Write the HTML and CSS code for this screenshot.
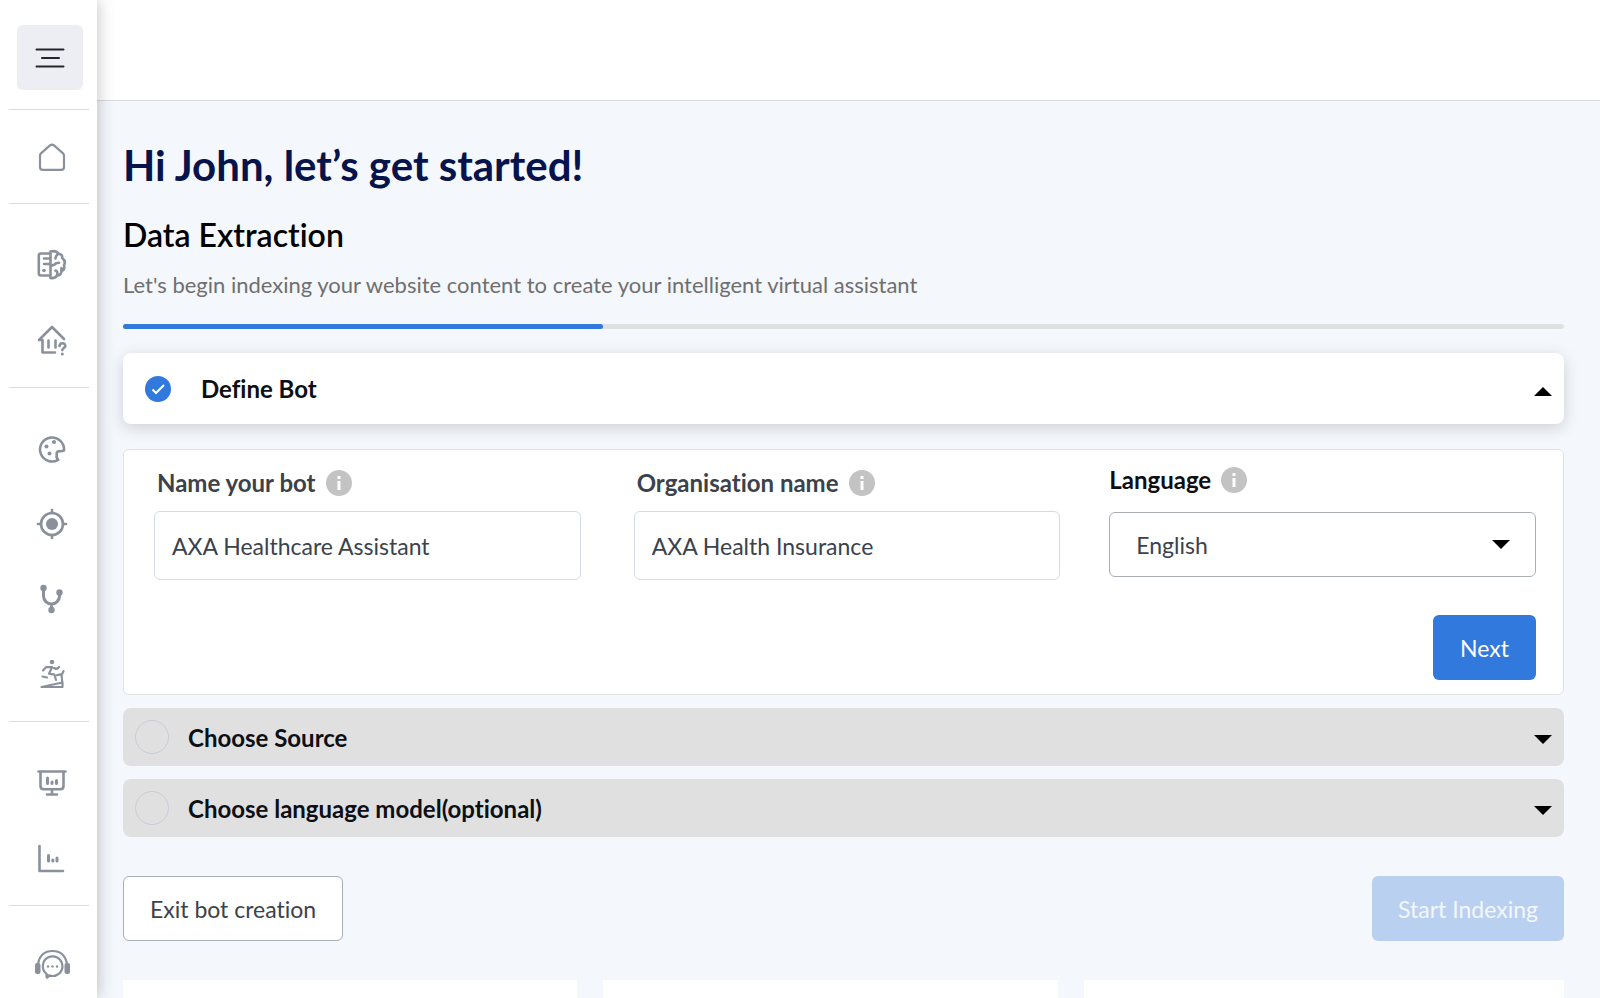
FILE: index.html
```html
<!DOCTYPE html>
<html lang="en">
<head>
<meta charset="utf-8">
<meta name="viewport" content="width=device-width, initial-scale=1">
<title>Data Extraction</title>
<link rel="stylesheet" href="styles.css">
</head>
<body>
<div class="app">
  <aside class="sidebar">
    <button class="menu-button" type="button" aria-label="Menu">
      <svg width="30" height="22" viewBox="0 0 30 22" fill="none" stroke="#23262f" stroke-width="2" stroke-linecap="round"><path d="M1.500 2.500h27M7 11h17M1.500 19.500h27"/></svg>
    </button>
    <nav class="nav">
      <div class="nav-group nav-group-first">
        <a class="nav-item" href="#" aria-label="Home"><svg class="icon" viewBox="0 0 36 36"><path class="thin" d="M6 16.500c0-1 .4-1.700 1.200-2.400l8.800-7.700c1.400-1.200 2.600-1.200 4 0l8.800 7.700c.8.700 1.200 1.400 1.200 2.400V28c0 1.900-1 2.800-2.800 2.800H8.800C7 30.800 6 29.900 6 28z"/></svg></a>
      </div>
      <div class="nav-group">
        <a class="nav-item" href="#" aria-label="Knowledge"><svg class="icon" viewBox="0 0 36 36"><path d="M16.500 6.500H7C5.500 6.500 4.800 7.200 4.800 8.700v17.600c0 1.500.7 2.200 2.200 2.200h9.500M16.500 4.500v26.500M16.500 4.500c3.500-.8 6.500 0 7.800 2.200 2.700 0 4.200 1.800 3.900 4.300 2.300 1.800 3.300 4.500 1.800 7 .8 3-.4 5.500-2.600 6.300-.2 2.700-1.900 4.200-4.400 4.200-1.500 2.300-4 3-6.500 2.500M10 11.500h6M10 17h6M16.500 18.500c3 0 4.500-.6 5.500-2.200l3-.5M21.500 11.500c-.1-2 .8-3.200 2.800-4.800M21.500 23.500c1.500.5 2.200 2.500 1.500 5M27.400 24.300v-3.300"/><circle class="dot" cx="10" cy="23.500" r="1.800"/></svg></a>
        <a class="nav-item" href="#" aria-label="Unanswered"><svg class="icon" viewBox="0 0 36 36"><path d="M5 18L18 5l12 12M5 18h3.500v12.500H21M14.500 18.500v7M21.500 18.500v7M25.500 24c.2-2 1.300-2.800 3-2.700 1.800.1 2.900 1.200 2.800 2.800-.1 1.800-3 2-3 4"/><circle class="dot" cx="28.300" cy="32" r="1.500"/></svg></a>
      </div>
      <div class="nav-group">
        <a class="nav-item" href="#" aria-label="Appearance"><svg class="icon" viewBox="0 0 36 36"><path d="M24.200 28.800A12 12 0 1 1 30 19.500c-2.300.8-3.300 1.100-4.500.6-2.500.1-3.200 1.900-2.700 3.400-.6 2 0 4 1.400 5.300z"/><circle class="dot" cx="12.500" cy="15.500" r="2"/><circle class="dot" cx="20" cy="11" r="2"/><circle class="dot" cx="15.500" cy="22.500" r="2"/></svg></a>
        <a class="nav-item" href="#" aria-label="Target"><svg class="icon" viewBox="0 0 36 36"><circle cx="18" cy="18" r="11"/><circle class="dot" cx="18" cy="18" r="6"/><path d="M18 4v3M18 29v3M4 18h3M29 18h3"/></svg></a>
        <a class="nav-item" href="#" aria-label="Flows"><svg class="icon icon-heavy" viewBox="0 0 36 36"><path d="M9.500 7v8a8 8 0 0 0 16 0v-3M17.500 23v6"/><circle class="dot" cx="9.500" cy="7" r="3.200"/><circle class="dot" cx="25.500" cy="11.500" r="3.200"/><circle class="dot" cx="17.500" cy="29" r="3.200"/></svg></a>
        <a class="nav-item" href="#" aria-label="Training"><svg class="icon icon-thin" viewBox="0 0 36 36"><circle class="dot" cx="18" cy="6" r="2.300"/><path d="M9 14.500l3-3.300h6l-3 6.500 5.500 1L22 24M20 12c2 1.500 3.500.8 5-1M8.500 20.500l4.500 1M7.500 31l21-4.500V31zM28.300 26.500l-.8-8M23 19.200l5-1 1.500-3"/></svg></a>
      </div>
      <div class="nav-group">
        <a class="nav-item" href="#" aria-label="Reports"><svg class="icon" viewBox="0 0 36 36"><path d="M4.500 6.500h27M6.500 7v14c0 2.200 1 3.200 3.200 3.200h16.600c2.200 0 3.200-1 3.200-3.200V7M18 24.500V29M13 29.500h10"/><path class="bars" d="M13.500 13v5.500M18 17v1.500M22.500 15.500v3"/></svg></a>
        <a class="nav-item" href="#" aria-label="Analytics"><svg class="icon" viewBox="0 0 36 36"><path d="M5.500 6v25H29"/><path class="bars" d="M14.500 15.500V21M18.800 20v1M23 18v3"/></svg></a>
      </div>
      <div class="nav-group nav-group-last">
        <a class="nav-item" href="#" aria-label="Support"><svg class="icon" viewBox="0 0 36 36"><path class="thin" d="M4 16C5.500 7.500 11 3 18.500 3S31.500 7.500 33 16"/><path class="thin" d="M12.500 29v-3.200A9.800 9.800 0 1 1 16 27.600z"/><path class="dot" d="M12.500 31.500v-6l5 2z"/><rect class="dot" x="1" y="15" width="5.500" height="11" rx="2"/><rect class="dot" x="30.500" y="15" width="5.500" height="11" rx="2"/><circle class="dot" cx="14" cy="18.500" r="1.200"/><circle class="dot" cx="18.500" cy="18.500" r="1.200"/><circle class="dot" cx="23" cy="18.500" r="1.200"/></svg></a>
      </div>
    </nav>
  </aside>

  <div class="page">
    <header class="topbar"></header>
    <main class="content">
      <h1 class="greeting">Hi John, let’s get started!</h1>
      <h2 class="section-title">Data Extraction</h2>
      <p class="section-text">Let's begin indexing your website content to create your intelligent virtual assistant</p>
      <div class="progress"><div class="progress-fill"></div></div>

      <button class="step step-open" type="button" aria-expanded="true">
        <svg class="step-check" width="26" height="26" viewBox="0 0 26 26"><circle cx="13" cy="13" r="13" fill="#3179dc"/><path d="M7.500 13.500l3.500 3.500 8-8" fill="none" stroke="#fff" stroke-width="2"/></svg>
        <span class="step-label">Define Bot</span>
        <svg class="caret" width="18" height="10" viewBox="0 0 18 10"><path d="M9 0l9 9H0z"/></svg>
      </button>

      <form class="panel">
        <div class="fields">
          <div class="field">
            <div class="field-head"><label for="bot">Name your bot</label><svg class="info" viewBox="0 0 26 26"><circle cx="13" cy="13" r="13" fill="#c3c3c3"/><path d="M11.500 6h3v3h-3zM11.500 11h3v9h-3z" fill="#fff"/></svg></div>
            <input class="control" id="bot" type="text" value="AXA Healthcare Assistant">
          </div>
          <div class="field">
            <div class="field-head"><label for="org">Organisation name</label><svg class="info" viewBox="0 0 26 26"><circle cx="13" cy="13" r="13" fill="#c3c3c3"/><path d="M11.500 6h3v3h-3zM11.500 11h3v9h-3z" fill="#fff"/></svg></div>
            <input class="control" id="org" type="text" value="AXA Health Insurance">
          </div>
          <div class="field field-language">
            <div class="field-head"><label for="lang">Language</label><svg class="info" viewBox="0 0 26 26"><circle cx="13" cy="13" r="13" fill="#c3c3c3"/><path d="M11.500 6h3v3h-3zM11.500 11h3v9h-3z" fill="#fff"/></svg></div>
            <div class="select-wrap">
              <select class="control select" id="lang"><option>English</option></select>
              <svg class="select-caret" width="18" height="10" viewBox="0 0 18 10"><path d="M0 0h18L9 9z"/></svg>
            </div>
          </div>
        </div>
        <div class="panel-actions"><button class="button button-primary" type="button">Next</button></div>
      </form>

      <button class="step step-closed" type="button" aria-expanded="false">
        <span class="step-ring"></span>
        <span class="step-label">Choose Source</span>
        <svg class="caret" width="18" height="10" viewBox="0 0 18 10"><path d="M0 0h18L9 9z"/></svg>
      </button>
      <button class="step step-closed" type="button" aria-expanded="false">
        <span class="step-ring"></span>
        <span class="step-label">Choose language model(optional)</span>
        <svg class="caret" width="18" height="10" viewBox="0 0 18 10"><path d="M0 0h18L9 9z"/></svg>
      </button>

      <div class="actions">
        <button class="button button-outline" type="button">Exit bot creation</button>
        <button class="button button-primary" type="button" disabled>Start Indexing</button>
      </div>

      <div class="cards"><div class="card"></div><div class="card"></div><div class="card"></div></div>
    </main>
  </div>
</div>
</body>
</html>
```
FILE: styles.css
```css
* {
  box-sizing: border-box;
}

body {
  margin: 0;
  height: 100vh;
  overflow: hidden;
  background: #f4f7fc;
  color: #0c0f14;
  font-family: Lato, "Liberation Sans", sans-serif;
  font-size: 23px;
  font-variant-ligatures: none;
}

button,
input,
select {
  font: inherit;
}

.app {
  display: flex;
  height: 100vh;
}

.sidebar {
  position: relative;
  z-index: 1;
  flex: none;
  width: 97px;
  padding: 25px 8px 0 9px;
  overflow: hidden;
  background: #fff;
  box-shadow: 0 0 16px rgba(0, 0, 0, 0.26);
}

.menu-button {
  display: flex;
  align-items: center;
  justify-content: center;
  width: 66px;
  height: 65px;
  margin: 0 8px 19px;
  padding: 0;
  border: 0;
  border-radius: 6px;
  background: #edeef3;
}

.nav-group {
  padding: 23px 0 10px 6px;
  border-top: 1px solid #d3dce7;
}

.nav-group-first {
  padding-top: 9px;
  padding-bottom: 9px;
}

.nav-group-last {
  padding-top: 22px;
}

.nav-item {
  display: flex;
  align-items: center;
  justify-content: center;
  height: 75px;
}

.icon {
  width: 36px;
  height: 36px;
  fill: none;
  stroke: #8a919d;
  stroke-width: 2.6;
  stroke-linecap: round;
  stroke-linejoin: round;
}

.icon-heavy {
  stroke-width: 3;
}

.icon-thin,
.thin {
  stroke-width: 2.2;
}

.bars {
  stroke-width: 3;
}

.dot {
  fill: #8a919d;
  stroke: none;
}

.page {
  flex: 1;
  min-width: 0;
}

.topbar {
  height: 101px;
  border-bottom: 1px solid #d9dbdf;
  background: #fff;
}

.content {
  padding: 39px 36px 0 26px;
}

.greeting {
  margin: 0;
  color: #07134b;
  font-size: 42px;
  font-weight: 700;
  line-height: 50px;
}

.section-title {
  margin: 25px 0 0;
  color: #000;
  font-size: 32px;
  font-weight: 600;
  line-height: 40px;
}

.section-text {
  margin: 15px 0 0;
  color: #6f6f6f;
  font-size: 22px;
  line-height: 30px;
}

.progress {
  height: 5px;
  margin: 24px 0;
  border-radius: 3px;
  background: #dfe0e2;
}

.progress-fill {
  width: 33.3%;
  height: 100%;
  border-radius: inherit;
  background: #3179dc;
}

.step {
  display: flex;
  align-items: center;
  width: 100%;
  padding: 0 12px;
  border: 0;
  border-radius: 8px;
  color: #0c0f14;
  font-size: 24px;
  font-weight: 700;
  text-align: left;
}

.step-open {
  height: 71px;
  margin-bottom: 25px;
  background: #fff;
  box-shadow: 0 4px 16px rgba(0, 0, 0, 0.16);
}

.step-check {
  margin: 0 30px 0 10px;
}

.step-closed {
  height: 58px;
  margin-top: 13px;
  background: #e0e0e0;
}

.step-ring {
  width: 34px;
  height: 34px;
  margin-right: 19px;
  border: 1px solid #c8cdd6;
  border-radius: 50%;
}

.caret {
  margin: 6px 0 0 auto;
}

.panel {
  padding-bottom: 14px;
  border: 1px solid #dfe2e6;
  border-radius: 6px;
  background: #fff;
}

.fields {
  display: grid;
  grid-template-columns: repeat(3, 1fr);
}

.field {
  padding: 18px 23px 0 30px;
}

.field-head {
  display: flex;
  align-items: center;
  gap: 10px;
  height: 30px;
  margin: 0 0 13px 3px;
  color: #3b424b;
  font-size: 24px;
  font-weight: 700;
  line-height: 28px;
}

.info {
  width: 26px;
  height: 26px;
}

.control {
  display: block;
  width: 100%;
  height: 69px;
  padding: 0 17px;
  border: 1px solid #d5dbe5;
  border-radius: 6px;
  background: #fff;
  color: #3b424b;
}

.field-language {
  padding: 15px 27px 0 26px;
}

.field-language .field-head {
  margin: 0 0 17px;
  color: #0c0f14;
}

.select-wrap {
  position: relative;
}

.select {
  height: 65px;
  padding: 0 26px;
  border-color: #a9aeb9;
  appearance: none;
}

.select-caret {
  position: absolute;
  top: 28px;
  right: 26px;
  pointer-events: none;
}

.panel-actions {
  display: flex;
  justify-content: flex-end;
  padding: 35px 27px 0;
}

.button {
  height: 65px;
  padding: 0 26px;
  border: 1px solid transparent;
  border-radius: 6px;
}

.button-primary {
  border: 0;
  padding: 0 27px;
  background: #3179dc;
  color: #fff;
}

.button-primary:disabled {
  padding: 0 26px;
  background: #bad0f1;
  color: #f3f7fc;
}

.button-outline {
  border-color: #a9aeb9;
  background: #fff;
  color: #3b424b;
}

.actions {
  display: flex;
  justify-content: space-between;
  margin-top: 39px;
}

.cards {
  display: grid;
  grid-template-columns: repeat(3, 1fr);
  margin-top: 39px;
}

.card {
  height: 18px;
  margin-right: 26px;
  background: #fff;
}

.card:last-child {
  margin-right: 0;
}
```
